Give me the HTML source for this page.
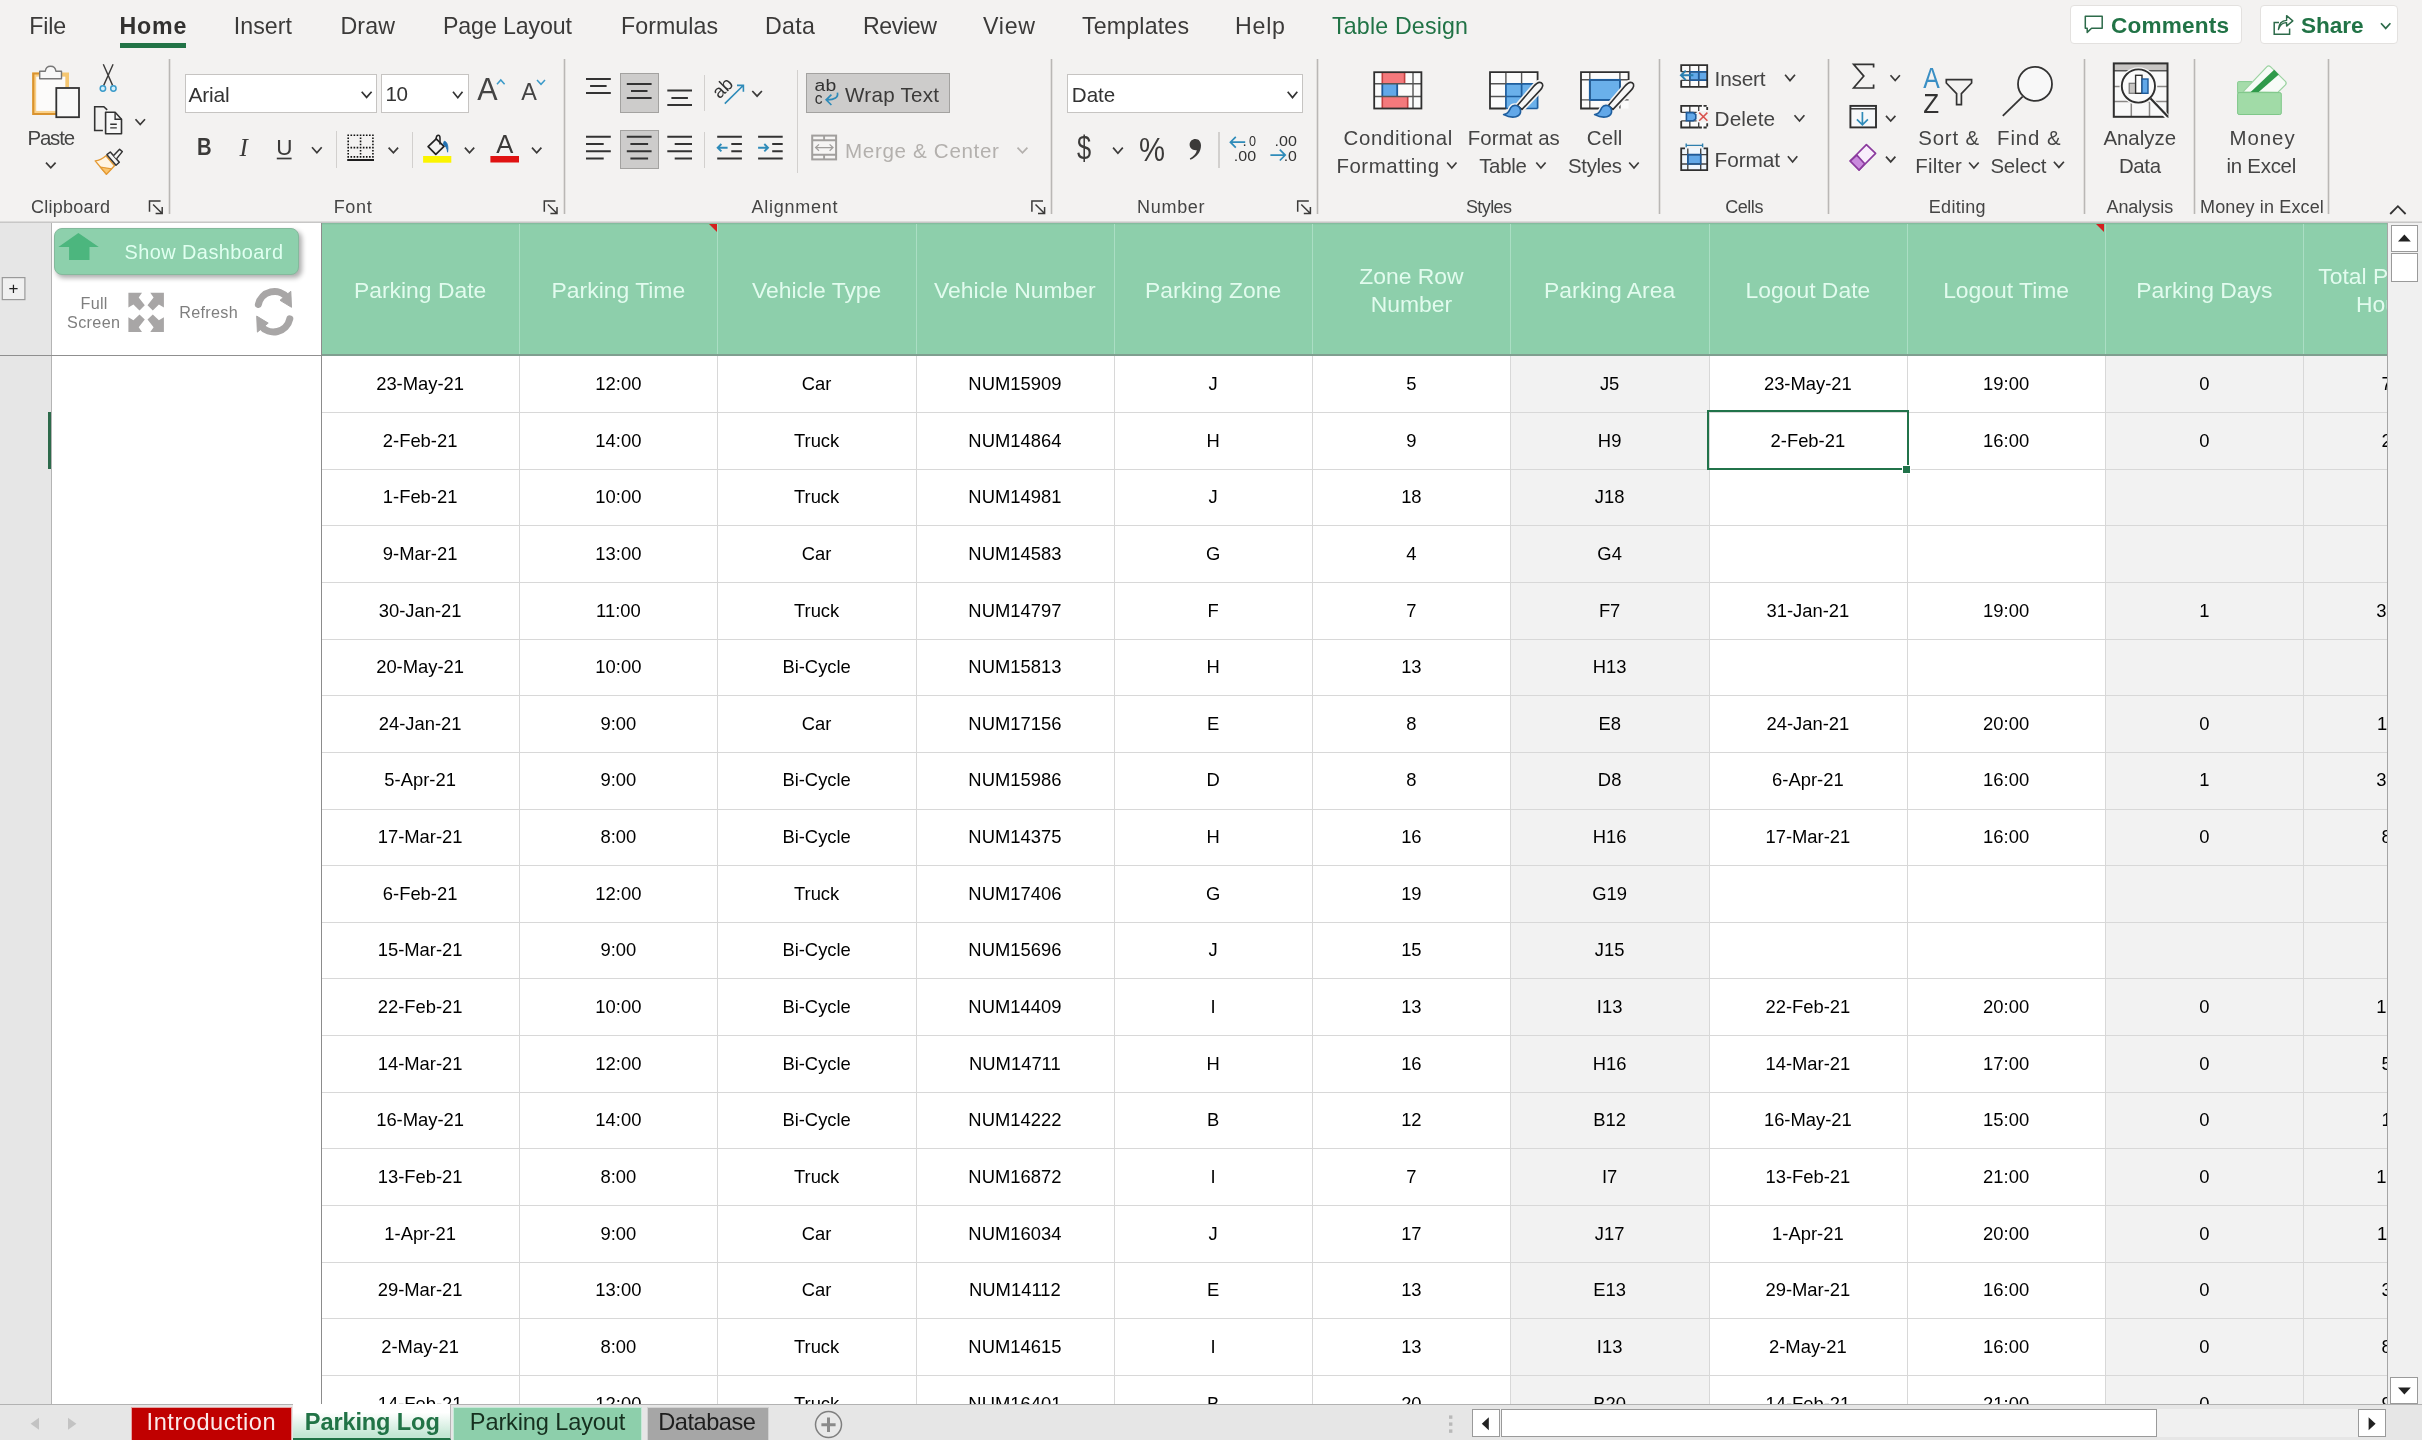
<!DOCTYPE html>
<html lang="en"><head><meta charset="utf-8"><title>Parking Log</title>
<style>
html,body{margin:0;padding:0}
body{width:2422px;height:1440px;position:relative;overflow:hidden;background:#f3f2f1;font-family:"Liberation Sans",sans-serif}
.t{position:absolute;white-space:pre;display:block}
.sep{position:absolute;width:1px;background:#b9b7b5;border-left:1px solid #e2e0de;border-right:1px solid #e2e0de;box-sizing:content-box}
.sep2{position:absolute;width:1.3px;background:#d2d0ce}
.box{position:absolute;background:#fff;border:1.8px solid #c6c4c2;box-sizing:border-box}
.sel{position:absolute;background:#cdcccb;border:1.5px solid #a3a2a0;box-sizing:border-box}
.btn{position:absolute;background:#fff;border:1px solid #e3e1df;border-radius:4px;box-sizing:border-box}
#all{position:absolute;left:0;top:0;width:2422px;height:1440px;will-change:transform}
#ribbon{position:absolute;left:0;top:0;width:2422px;height:221px;background:#f3f2f1}
#rshadow{position:absolute;left:0;top:221px;width:2422px;height:3px;background:linear-gradient(#e6e5e4,#a9a9a9)}
#sheet{position:absolute;left:0;top:223px;width:2387px;height:1181.5px;background:#fff;overflow:hidden}
#vscroll{position:absolute;left:2387px;top:223px;width:35px;height:1182px;background:#f0f0f0;border-left:1.4px solid #a6a6a6;box-sizing:border-box}
#bottom{position:absolute;left:0;top:1404px;width:2422px;height:36px;background:#e6e6e6;border-top:1.4px solid #b2b2b2;box-sizing:border-box}
.sb{position:absolute;background:#fff;border:1.8px solid #9a9a9a;box-sizing:border-box}
.tab{position:absolute;top:1407.2px;height:33px;box-sizing:border-box}
</style></head><body><div id="all">
<div id="ribbon"></div>
<span class="t" style="left:29.20px;top:15.00px;font-size:23.2px;line-height:23.2px;color:#3b3a39;letter-spacing:-0.125px;">File</span>
<span class="t" style="left:119.60px;top:15.00px;font-size:23.2px;line-height:23.2px;color:#323130;font-weight:700;letter-spacing:0.754px;">Home</span>
<span class="t" style="left:233.80px;top:15.00px;font-size:23.2px;line-height:23.2px;color:#3b3a39;letter-spacing:0.040px;">Insert</span>
<span class="t" style="left:340.50px;top:15.00px;font-size:23.2px;line-height:23.2px;color:#3b3a39;letter-spacing:0.097px;">Draw</span>
<span class="t" style="left:443.00px;top:15.00px;font-size:23.2px;line-height:23.2px;color:#3b3a39;letter-spacing:-0.122px;">Page Layout</span>
<span class="t" style="left:621.00px;top:15.00px;font-size:23.2px;line-height:23.2px;color:#3b3a39;letter-spacing:0.051px;">Formulas</span>
<span class="t" style="left:765.00px;top:15.00px;font-size:23.2px;line-height:23.2px;color:#3b3a39;letter-spacing:0.339px;">Data</span>
<span class="t" style="left:863.00px;top:15.00px;font-size:23.2px;line-height:23.2px;color:#3b3a39;letter-spacing:-0.406px;">Review</span>
<span class="t" style="left:983.00px;top:15.00px;font-size:23.2px;line-height:23.2px;color:#3b3a39;letter-spacing:0.719px;">View</span>
<span class="t" style="left:1082.00px;top:15.00px;font-size:23.2px;line-height:23.2px;color:#3b3a39;letter-spacing:0.164px;">Templates</span>
<span class="t" style="left:1235.00px;top:15.00px;font-size:23.2px;line-height:23.2px;color:#3b3a39;letter-spacing:0.766px;">Help</span>
<span class="t" style="left:1332.00px;top:15.00px;font-size:23.2px;line-height:23.2px;color:#217346;letter-spacing:0.176px;">Table Design</span>
<div style="position:absolute;left:120px;top:43px;width:66px;height:5px;background:#217346"></div>
<div class="btn" style="left:2070px;top:5px;width:172px;height:39px"></div>
<div class="btn" style="left:2260px;top:5px;width:138px;height:39px"></div>
<span class="t" style="left:2111.00px;top:15.00px;font-size:22.6px;line-height:22.6px;color:#217346;font-weight:700;letter-spacing:0.176px;">Comments</span>
<span class="t" style="left:2301.00px;top:15.00px;font-size:22.6px;line-height:22.6px;color:#217346;font-weight:700;letter-spacing:-0.074px;">Share</span>
<div class="sep" style="left:168px;top:58.5px;height:155px"></div>
<div class="sep" style="left:563px;top:58.5px;height:155px"></div>
<div class="sep" style="left:1050px;top:58.5px;height:155px"></div>
<div class="sep" style="left:1316px;top:58.5px;height:155px"></div>
<div class="sep" style="left:1658px;top:58.5px;height:155px"></div>
<div class="sep" style="left:1827px;top:58.5px;height:155px"></div>
<div class="sep" style="left:2083px;top:58.5px;height:155px"></div>
<div class="sep" style="left:2193px;top:58.5px;height:155px"></div>
<div class="sep" style="left:2327px;top:58.5px;height:155px"></div>
<div class="sep2" style="left:336.0px;top:131px;height:36.5px"></div>
<div class="sep2" style="left:412.0px;top:131.5px;height:36.5px"></div>
<div class="sep2" style="left:703.8px;top:74.8px;height:36.2px"></div>
<div class="sep2" style="left:703.8px;top:131.7px;height:35.9px"></div>
<div class="sep2" style="left:796.9px;top:69.5px;height:103.5px"></div>
<div class="sep2" style="left:1218.3px;top:131.7px;height:35.9px"></div>
<span class="t" style="left:30.90px;top:198.00px;font-size:18px;line-height:18px;color:#444;letter-spacing:0.269px;">Clipboard</span>
<span class="t" style="left:333.70px;top:198.00px;font-size:18px;line-height:18px;color:#444;letter-spacing:0.690px;">Font</span>
<span class="t" style="left:751.60px;top:198.00px;font-size:18px;line-height:18px;color:#444;letter-spacing:0.719px;">Alignment</span>
<span class="t" style="left:1137.00px;top:198.00px;font-size:18px;line-height:18px;color:#444;letter-spacing:0.714px;">Number</span>
<span class="t" style="left:1465.90px;top:198.00px;font-size:18px;line-height:18px;color:#444;letter-spacing:-0.586px;">Styles</span>
<span class="t" style="left:1725.20px;top:198.00px;font-size:18px;line-height:18px;color:#444;letter-spacing:-0.454px;">Cells</span>
<span class="t" style="left:1928.80px;top:198.00px;font-size:18px;line-height:18px;color:#444;letter-spacing:0.292px;">Editing</span>
<span class="t" style="left:2106.40px;top:198.00px;font-size:18px;line-height:18px;color:#444;letter-spacing:-0.019px;">Analysis</span>
<span class="t" style="left:2200.00px;top:198.00px;font-size:18px;line-height:18px;color:#444;letter-spacing:0.134px;">Money in Excel</span>
<span class="t" style="left:27.50px;top:128.00px;font-size:20.4px;line-height:20.4px;color:#444;letter-spacing:-1.164px;">Paste</span>
<div class="box" style="left:185px;top:73.5px;width:192.4px;height:39px"></div>
<div class="box" style="left:380.7px;top:73.5px;width:88.1px;height:39px"></div>
<span class="t" style="left:188.60px;top:84.00px;font-size:21px;line-height:21px;color:#333;letter-spacing:-0.254px;">Arial</span>
<span class="t" style="left:385.60px;top:84.00px;font-size:20.6px;line-height:20.6px;color:#333;letter-spacing:-0.522px;">10</span>
<span class="t" style="left:477.30px;top:74.00px;font-size:30.5px;line-height:30.5px;color:#444;">A</span>
<span class="t" style="left:521.20px;top:81.00px;font-size:23.4px;line-height:23.4px;color:#444;">A</span>
<span class="t" style="left:197.00px;top:136.00px;font-size:23.5px;line-height:23.5px;color:#3b3a39;font-weight:700;transform:scaleX(.86);transform-origin:0 0;">B</span>
<span class="t" style="left:239.50px;top:135.00px;font-size:25px;line-height:25px;color:#3b3a39;font-style:italic;font-family:'Liberation Serif',serif;">I</span>
<span class="t" style="left:276.30px;top:137.00px;font-size:22.5px;line-height:22.5px;color:#3b3a39;">U</span>
<span class="t" style="left:496.20px;top:132.00px;font-size:25.6px;line-height:25.6px;color:#3b3a39;">A</span>
<div class="sel" style="left:620.2px;top:73.1px;width:38.5px;height:39.7px"></div>
<div class="sel" style="left:620.2px;top:129.6px;width:38.5px;height:39.8px"></div>
<div class="sel" style="left:806px;top:73.1px;width:143.7px;height:39.7px"></div>
<span class="t" style="left:845.00px;top:85.00px;font-size:20.6px;line-height:20.6px;color:#3b3a39;letter-spacing:0.256px;">Wrap Text</span>
<span class="t" style="left:845.00px;top:141.00px;font-size:20.6px;line-height:20.6px;color:#b3b0ad;letter-spacing:0.663px;">Merge &amp; Center</span>
<div class="box" style="left:1067.3px;top:73.5px;width:236.1px;height:39px"></div>
<span class="t" style="left:1071.80px;top:85.00px;font-size:20.6px;line-height:20.6px;color:#333;letter-spacing:-0.005px;">Date</span>
<span class="t" style="left:1077.40px;top:131.00px;font-size:33.5px;line-height:33.5px;color:#3b3a39;transform:scaleX(.76);transform-origin:0 0;">$</span>
<span class="t" style="left:1139.20px;top:132.00px;font-size:34px;line-height:34px;color:#3b3a39;transform:scaleX(.86);transform-origin:0 0;">%</span>
<span class="t" style="left:1343.60px;top:128.00px;font-size:20.4px;line-height:20.4px;color:#444;letter-spacing:0.677px;">Conditional</span>
<span class="t" style="left:1336.40px;top:156.00px;font-size:20.4px;line-height:20.4px;color:#444;letter-spacing:0.572px;">Formatting</span>
<span class="t" style="left:1467.80px;top:128.00px;font-size:20.4px;line-height:20.4px;color:#444;letter-spacing:0.027px;">Format as</span>
<span class="t" style="left:1479.20px;top:156.00px;font-size:20.4px;line-height:20.4px;color:#444;letter-spacing:-0.287px;">Table</span>
<span class="t" style="left:1586.80px;top:128.00px;font-size:20.4px;line-height:20.4px;color:#444;letter-spacing:0.153px;">Cell</span>
<span class="t" style="left:1568.00px;top:156.00px;font-size:20.4px;line-height:20.4px;color:#444;letter-spacing:-0.306px;">Styles</span>
<span class="t" style="left:1714.60px;top:69.00px;font-size:20.8px;line-height:20.8px;color:#444;letter-spacing:-0.203px;">Insert</span>
<span class="t" style="left:1714.60px;top:109.00px;font-size:20.8px;line-height:20.8px;color:#444;letter-spacing:0.075px;">Delete</span>
<span class="t" style="left:1714.60px;top:150.00px;font-size:20.8px;line-height:20.8px;color:#444;letter-spacing:-0.075px;">Format</span>
<span class="t" style="left:1918.20px;top:128.00px;font-size:20.4px;line-height:20.4px;color:#444;letter-spacing:0.866px;">Sort &amp;</span>
<span class="t" style="left:1915.20px;top:156.00px;font-size:20.4px;line-height:20.4px;color:#444;letter-spacing:0.258px;">Filter</span>
<span class="t" style="left:1997.00px;top:128.00px;font-size:20.4px;line-height:20.4px;color:#444;letter-spacing:0.933px;">Find &amp;</span>
<span class="t" style="left:1990.40px;top:156.00px;font-size:20.4px;line-height:20.4px;color:#444;letter-spacing:-0.134px;">Select</span>
<span class="t" style="left:2103.40px;top:128.00px;font-size:20.4px;line-height:20.4px;color:#444;letter-spacing:0.009px;">Analyze</span>
<span class="t" style="left:2119.00px;top:156.00px;font-size:20.4px;line-height:20.4px;color:#444;letter-spacing:-0.359px;">Data</span>
<span class="t" style="left:2229.40px;top:128.00px;font-size:20.4px;line-height:20.4px;color:#444;letter-spacing:0.999px;">Money</span>
<span class="t" style="left:2226.60px;top:156.00px;font-size:20.4px;line-height:20.4px;color:#444;letter-spacing:-0.258px;">in Excel</span>
<svg style="position:absolute;left:0;top:0" width="2422" height="222" viewBox="0 0 2422 222" font-family="Liberation Sans, sans-serif">
<path d="M2085.3 16.3H2102.2V28.2H2091.6L2087.2 32.4V28.2H2085.3Z" fill="none" stroke="#2d6b4a" stroke-width="1.5" stroke-linejoin="round"/>
<path d="M2279 22.6H2274.2V34.2H2289.6V28.5" fill="none" stroke="#2d6b4a" stroke-width="1.5"/>
<path d="M2278.4 29.5C2278.8 24 2282 20.6 2286.6 20.4V15.6L2292.8 20.9L2286.6 26.1V22.6C2283 22.4 2280.2 24.6 2278.4 29.5Z" fill="none" stroke="#2d6b4a" stroke-width="1.4" stroke-linejoin="round"/>
<path d="M2381.0 23.2L2385.7 28.4L2390.4 23.2" fill="none" stroke="#2d6b4a" stroke-width="1.7"/>
<defs><linearGradient id="og" x1="0" x2="1"><stop offset="0" stop-color="#d28c2c"/><stop offset="1" stop-color="#fbd489"/></linearGradient></defs>
<path d="M40 72.6H32.2V115H56V110.8H36.4V76.8H40Z" fill="#fad189"/>
<path d="M40 72.6H32.2V115H56V113H34.4V74.6H40Z" fill="#d9932f"/>
<path d="M61.500 72.600H69V87H65.200V76.800H61.500Z" fill="#f6c771"/>
<rect x="36.4" y="76.8" width="28.8" height="34" fill="#fcfbfa"/>
<path d="M39.7 78.7V71.3H45.3C45.6 68.3 47.6 66.2 50.6 66.2C53.6 66.2 55.6 68.3 55.9 71.3H61.5V78.7Z" fill="#f8f8f8" stroke="#777" stroke-width="1.4" stroke-linejoin="round"/>
<rect x="56.3" y="88" width="22.700" height="29.200" fill="#f9f9f9" stroke="#333" stroke-width="1.8"/>
<path d="M46.0 162.6L50.8 167.8L55.6 162.6" fill="none" stroke="#3b3a39" stroke-width="1.7"/>
<path d="M103.3 64.2L112.6 85.4M113.1 64.2L103.7 85.4" stroke="#3b3a39" stroke-width="1.4" fill="none"/>
<circle cx="102.9" cy="88.5" r="2.7" fill="#d3effb" stroke="#3a9ac9" stroke-width="1.5"/><circle cx="113.4" cy="88.5" r="2.7" fill="#d3effb" stroke="#3a9ac9" stroke-width="1.5"/>
<path d="M102.9 130.5H94.7V106.7H103.8L107.2 109.9" fill="none" stroke="#333" stroke-width="1.6"/>
<path d="M105.6 112.3H115.1L121.5 119.2V133.8H105.6Z" fill="#f8f8f8" stroke="#333" stroke-width="1.6" stroke-linejoin="round"/>
<path d="M115.1 112.3V119.2H121.5M110.2 124.3H116.8M110.2 127.9H116.8" fill="none" stroke="#333" stroke-width="1.4"/>
<path d="M135.5 119.2L140.2 124.5L145.0 119.2" fill="none" stroke="#3b3a39" stroke-width="1.7"/>
<path d="M106 155.8C101.5 159.6 98 160.6 95.2 160.9L106.4 174.2L114.5 165.8Z" fill="#fff4e2" stroke="#e39a35" stroke-width="1.4" stroke-linejoin="round"/>
<path d="M100.3 167L106.4 174.2L111.6 168.8Z" fill="#fbc46c" stroke="#e39a35" stroke-width="1.2" stroke-linejoin="round"/>
<path d="M106.9 154.7L110.3 152L119.3 162.3L116 165.2Z" fill="#f4f4f4" stroke="#333" stroke-width="1.5" stroke-linejoin="round"/>
<path d="M113.6 155.6L119.6 149.3L122.3 151.6L116.5 158.9" fill="#f4f4f4" stroke="#333" stroke-width="1.5" stroke-linejoin="round"/>
<path d="M149.5 211.7V201.0H160.6M153.1 204.5L162.2 213.5M155.6 213.5H162.2V206.9" fill="none" stroke="#3b3a39" stroke-width="1.5"/>
<path d="M544.3 211.7V201.0H555.4M547.9 204.5L557.0 213.5M550.4 213.5H557.0V206.9" fill="none" stroke="#3b3a39" stroke-width="1.5"/>
<path d="M1031.9 211.7V201.0H1043.0M1035.5 204.5L1044.6 213.5M1038.0 213.5H1044.6V206.9" fill="none" stroke="#3b3a39" stroke-width="1.5"/>
<path d="M1297.7 211.7V201.0H1308.8M1301.3 204.5L1310.4 213.5M1303.8 213.5H1310.4V206.9" fill="none" stroke="#3b3a39" stroke-width="1.5"/>
<path d="M361.7 91.8L366.6 97.4L371.6 91.8" fill="none" stroke="#333" stroke-width="1.7"/>
<path d="M453.0 91.8L457.8 97.7L462.5 91.8" fill="none" stroke="#333" stroke-width="1.7"/>
<path d="M497.0 84.3L500.8 80.0L504.6 84.3" fill="none" stroke="#3a9ac9" stroke-width="1.5"/>
<path d="M537.0 80.0L541.0 84.3L545.0 80.0" fill="none" stroke="#3a9ac9" stroke-width="1.5"/>
<path d="M276.8 158.5H291.6" stroke="#3b3a39" stroke-width="1.7"/>
<path d="M312.0 147.3L316.9 152.8L321.7 147.3" fill="none" stroke="#3b3a39" stroke-width="1.7"/>
<path d="M347.40 134.40h1.6v1.6h-1.6zM347.40 137.50h1.6v1.6h-1.6zM347.40 140.60h1.6v1.6h-1.6zM347.40 143.70h1.6v1.6h-1.6zM347.40 146.80h1.6v1.6h-1.6zM347.40 149.90h1.6v1.6h-1.6zM347.40 153.00h1.6v1.6h-1.6zM347.40 156.10h1.6v1.6h-1.6zM350.49 134.40h1.6v1.6h-1.6zM350.49 146.80h1.6v1.6h-1.6zM350.49 156.10h1.6v1.6h-1.6zM353.58 134.40h1.6v1.6h-1.6zM353.58 146.80h1.6v1.6h-1.6zM353.58 156.10h1.6v1.6h-1.6zM356.67 134.40h1.6v1.6h-1.6zM356.67 146.80h1.6v1.6h-1.6zM356.67 156.10h1.6v1.6h-1.6zM359.76 134.40h1.6v1.6h-1.6zM359.76 137.50h1.6v1.6h-1.6zM359.76 140.60h1.6v1.6h-1.6zM359.76 143.70h1.6v1.6h-1.6zM359.76 146.80h1.6v1.6h-1.6zM359.76 149.90h1.6v1.6h-1.6zM359.76 153.00h1.6v1.6h-1.6zM359.76 156.10h1.6v1.6h-1.6zM362.85 134.40h1.6v1.6h-1.6zM362.85 146.80h1.6v1.6h-1.6zM362.85 156.10h1.6v1.6h-1.6zM365.94 134.40h1.6v1.6h-1.6zM365.94 146.80h1.6v1.6h-1.6zM365.94 156.10h1.6v1.6h-1.6zM369.03 134.40h1.6v1.6h-1.6zM369.03 146.80h1.6v1.6h-1.6zM369.03 156.10h1.6v1.6h-1.6zM372.12 134.40h1.6v1.6h-1.6zM372.12 137.50h1.6v1.6h-1.6zM372.12 140.60h1.6v1.6h-1.6zM372.12 143.70h1.6v1.6h-1.6zM372.12 146.80h1.6v1.6h-1.6zM372.12 149.90h1.6v1.6h-1.6zM372.12 153.00h1.6v1.6h-1.6zM372.12 156.10h1.6v1.6h-1.6z" fill="#111"/>
<path d="M347.2 160H374" stroke="#111" stroke-width="1.9"/>
<path d="M388.6 147.6L393.4 152.8L398.1 147.6" fill="none" stroke="#3b3a39" stroke-width="1.7"/>
<path d="M436.2 138.8L444 146.4L435.8 154.3L428.1 146.6Z" fill="none" stroke="#222" stroke-width="1.7" stroke-linejoin="round"/>
<path d="M436 139C436.2 136.6 437.2 135.2 438.4 135.2C439.5 135.2 440 136.3 440 138V144.4" fill="none" stroke="#222" stroke-width="1.5"/>
<path d="M444.2 141.2C447.2 141.6 448.6 146 447.6 152.2C447.2 148.4 445.8 146 443.2 144.2Z" fill="#1f6fb0" stroke="#1f6fb0" stroke-width="0.8" stroke-linejoin="round"/>
<rect x="423.1" y="156" width="28.2" height="6.7" fill="#fbf400"/>
<path d="M464.9 147.6L469.5 152.8L474.2 147.6" fill="none" stroke="#3b3a39" stroke-width="1.7"/>
<rect x="490.4" y="156" width="28.6" height="6.5" fill="#e01212"/>
<path d="M532.0 147.6L536.7 152.8L541.4 147.6" fill="none" stroke="#3b3a39" stroke-width="1.7"/>
<path d="M586.0 78.9H610.8M590.1 85.9H606.6M586.0 92.9H610.8" stroke="#333" stroke-width="2.0" fill="none"/>
<path d="M626.8 83.9H651.6M631.0 91.0H647.5M626.8 98.0H651.6" stroke="#333" stroke-width="2.0" fill="none"/>
<path d="M667.3 90.6H692.0M671.4 97.9H687.9M667.3 105.0H692.0" stroke="#333" stroke-width="2.0" fill="none"/>
<path d="M586.0 136.8H610.8M586.0 144.1H603.7M586.0 151.3H610.8M586.0 158.5H603.7" stroke="#333" stroke-width="2.0" fill="none"/>
<path d="M626.8 136.8H651.6M630.4 144.1H648.1M626.8 151.3H651.6M630.4 158.5H648.1" stroke="#333" stroke-width="2.0" fill="none"/>
<path d="M667.3 136.8H692.0M674.7 144.1H692.0M667.3 151.3H692.0M674.7 158.5H692.0" stroke="#333" stroke-width="2.0" fill="none"/>
<text x="0" y="0" transform="translate(719.6 99.6) rotate(-45)" font-size="18.6" fill="#333">ab</text>
<path d="M724.8 103.6L743.2 85.5M737 85.4H743.4V91.8" fill="none" stroke="#2e8bb9" stroke-width="1.6"/>
<path d="M752.3 91.0L757.1 96.2L761.9 91.0" fill="none" stroke="#3b3a39" stroke-width="1.7"/>
<path d="M717.2 136.8H741.9M731.3 144.1H741.9M731.3 151.3H741.9M717.2 158.5H741.9" stroke="#333" stroke-width="2.0" fill="none"/>
<path d="M717.9 147.7H727.6M721.4 144L717.7 147.7L721.4 151.4" fill="none" stroke="#2e8bb9" stroke-width="1.9"/>
<path d="M758.1 136.8H782.7M772.2 144.1H782.7M772.2 151.3H782.7M758.1 158.5H782.7" stroke="#333" stroke-width="2.0" fill="none"/>
<path d="M758.1 147.7H767.8M764.3 144L768 147.7L764.3 151.4" fill="none" stroke="#2e8bb9" stroke-width="1.9"/>
<text x="814.6" y="91" font-size="15.6" fill="#333" textLength="21.6" lengthAdjust="spacingAndGlyphs">ab</text>
<text x="814.8" y="104" font-size="15.6" fill="#333">c</text>
<path d="M837.4 92.6C838.6 97.4 834.4 99.9 827 99.8M831.4 94.6L826.2 99.8L831.4 105" fill="none" stroke="#2e8bb9" stroke-width="1.7"/>
<rect x="812.2" y="135.6" width="23.9" height="23.8" fill="#f6f5f4" stroke="#a19f9d" stroke-width="2"/>
<path d="M812.2 140.3H836.1M812.2 154.8H836.1M824.1 135.6V140.3M824.1 154.8V159.4" stroke="#a19f9d" stroke-width="1.9" fill="none"/>
<path d="M815.8 147.6H832.8M819 144.4L815.6 147.6L819 150.8M829.6 144.4L833 147.6L829.6 150.8" stroke="#a19f9d" stroke-width="1.3" fill="none"/>
<path d="M1017.5 147.6L1022.5 152.8L1027.4 147.6" fill="none" stroke="#b3b0ad" stroke-width="1.7"/>
<path d="M1287.7 91.8L1292.5 97.6L1297.3 91.8" fill="none" stroke="#333" stroke-width="1.7"/>
<path d="M1113.1 147.6L1117.9 153.2L1122.8 147.6" fill="none" stroke="#3b3a39" stroke-width="1.7"/>
<path d="M1189.6 144.6C1189.6 141.2 1192.2 138.9 1195.4 138.9C1199 138.9 1201 141.8 1201 145.6C1201 152 1196.8 157.4 1190.4 159.8L1189.8 158.4C1193.8 156.4 1196.2 153.6 1196.8 150.2C1192.600 150.800 1189.600 148.200 1189.600 144.600Z" fill="#3b3a39"/>
<text x="1248.9" y="145.9" font-size="15.2" fill="#333" textLength="7" lengthAdjust="spacingAndGlyphs">0</text>
<text x="1242.6" y="145.9" font-size="15.2" fill="#333">.</text>
<text x="1233.8" y="161" font-size="15.2" fill="#333" textLength="22.3" lengthAdjust="spacingAndGlyphs">.00</text>
<path d="M1230.6 142.2H1245.2M1235.8 136.8L1230.4 142.2L1235.8 147.6" fill="none" stroke="#2e8bb9" stroke-width="1.7"/>
<text x="1274.6" y="145.9" font-size="15.2" fill="#333" textLength="22.3" lengthAdjust="spacingAndGlyphs">.00</text>
<text x="1283.7" y="161" font-size="15.2" fill="#333" textLength="13.2" lengthAdjust="spacingAndGlyphs">.0</text>
<path d="M1270.4 155.1H1285M1279.8 149.7L1285.2 155.1L1279.8 160.500" fill="none" stroke="#2e8bb9" stroke-width="1.7"/>
<rect x="1374.200" y="72.200" width="47.2" height="36.3" fill="#fbfbfb"/>
<rect x="1382.3" y="72.2" width="22.3" height="11.6" fill="#f4797c"/><rect x="1382.3" y="96.5" width="25.4" height="12" fill="#f4797c"/>
<rect x="1382.3" y="83.8" width="14.9" height="12.7" fill="#62a8e8"/>
<path d="M1382.3 72.2V83.800M1404.6 72.2V83.8M1382.3 96.5V108.5M1407.7 96.5V108.5" stroke="#c24040" stroke-width="1.600" fill="none"/>
<path d="M1382.3 83.8V96.5M1397.2 83.8V96.5" stroke="#1e5a99" stroke-width="1.8" fill="none"/>
<path d="M1374.2 83.8H1421.4M1374.2 96.5H1421.4M1413 72.2V108.5" stroke="#555" stroke-width="1.400" fill="none"/>
<rect x="1374.200" y="72.200" width="47.2" height="36.3" fill="none" stroke="#2f2f2f" stroke-width="1.8"/>
<path d="M1447.2 162.5L1451.8 168.0L1456.5 162.5" fill="none" stroke="#3b3a39" stroke-width="1.7"/>
<rect x="1490" y="72.200" width="47.6" height="36.3" fill="#fbfbfb"/>
<rect x="1505.9" y="83.8" width="31.7" height="24.7" fill="#6ab0ea"/>
<path d="M1505.9 83.8V108.5M1521.6 83.8V108.5M1505.9 83.800H1537.6M1505.9 96.5H1537.600M1537.6 83.8V108.5M1505.900 108.5H1537.6" stroke="#1e5e9e" stroke-width="1.7" fill="none"/>
<path d="M1490 83.8H1505.900M1490 96.5H1505.900M1505.9 72.2V83.8M1521.6 72.2V83.8" stroke="#555" stroke-width="1.4" fill="none"/>
<path d="M1505.9 108.5H1490V72.2H1537.6V83.800" fill="none" stroke="#2f2f2f" stroke-width="1.8"/>
<path d="M1541.2 82.8C1543.8 84.4 1542.8 87.6 1540.0 90.4L1522.0 109.4L1517.4 105.6L1533.6 86.6C1536.4 83.2 1539.2 81.6 1541.2 82.8Z" fill="#f6f6f6" stroke="#f3f2f1" stroke-width="5" stroke-linejoin="round"/><path d="M1520.6 110.800C1521.0 116.4 1513.6 119.6 1503.6 114.6C1508.8 114.2 1509.2 110.4 1510.8 107.600C1513.2 104 1519.8 104.6 1520.6 110.800Z" fill="#62a8e8" stroke="#f3f2f1" stroke-width="4.4" stroke-linejoin="round"/><path d="M1541.2 82.8C1543.8 84.4 1542.8 87.6 1540.0 90.4L1522.0 109.4L1517.4 105.6L1533.6 86.6C1536.4 83.2 1539.2 81.6 1541.2 82.8Z" fill="#f6f6f6" stroke="#2f2f2f" stroke-width="1.6" stroke-linejoin="round"/><path d="M1520.6 110.800C1521.0 116.4 1513.6 119.6 1503.6 114.6C1508.8 114.2 1509.2 110.4 1510.8 107.600C1513.2 104 1519.8 104.6 1520.6 110.800Z" fill="#62a8e8" stroke="#1e5e9e" stroke-width="1.6" stroke-linejoin="round"/>
<path d="M1536.3 162.5L1540.9 168.0L1545.6 162.5" fill="none" stroke="#3b3a39" stroke-width="1.7"/>
<rect x="1581" y="72.2" width="47.6" height="36.3" fill="#fbfbfb"/>
<rect x="1589.8" y="79.8" width="30.1" height="20.100" fill="#6ab0ea" stroke="#1e5e9e" stroke-width="1.7"/>
<path d="M1581 79.8H1628.6M1581 99.900H1628.6M1589.8 72.2V108.5M1619.9 72.200V108.5" stroke="#555" stroke-width="1.4" fill="none"/>
<path d="M1589.8 79.8V99.9H1619.9V79.8Z" fill="none" stroke="#1e5e9e" stroke-width="1.7"/>
<path d="M1600 108.5H1581V72.2H1628.600V80" fill="none" stroke="#2f2f2f" stroke-width="1.8"/>
<path d="M1632.2 82.8C1634.8 84.4 1633.8 87.6 1631.0 90.4L1613.0 109.4L1608.4 105.6L1624.6 86.6C1627.4 83.2 1630.2 81.6 1632.2 82.8Z" fill="#f6f6f6" stroke="#f3f2f1" stroke-width="5" stroke-linejoin="round"/><path d="M1611.6 110.800C1612.0 116.4 1604.6 119.6 1594.6 114.6C1599.8 114.2 1600.2 110.4 1601.8 107.600C1604.2 104 1610.8 104.6 1611.6 110.800Z" fill="#62a8e8" stroke="#f3f2f1" stroke-width="4.4" stroke-linejoin="round"/><path d="M1632.2 82.8C1634.8 84.4 1633.8 87.6 1631.0 90.4L1613.0 109.4L1608.4 105.6L1624.6 86.6C1627.4 83.2 1630.2 81.6 1632.2 82.8Z" fill="#f6f6f6" stroke="#2f2f2f" stroke-width="1.6" stroke-linejoin="round"/><path d="M1611.6 110.800C1612.0 116.4 1604.6 119.6 1594.6 114.6C1599.8 114.2 1600.2 110.4 1601.8 107.600C1604.2 104 1610.8 104.6 1611.6 110.800Z" fill="#62a8e8" stroke="#1e5e9e" stroke-width="1.6" stroke-linejoin="round"/>
<path d="M1629.2 162.5L1634.0 168.0L1638.7 162.5" fill="none" stroke="#3b3a39" stroke-width="1.7"/>
<rect x="1681.2" y="65.2" width="26" height="21.6" fill="#fbfbfb"/>
<rect x="1689.8" y="71.800" width="17.4" height="8.5" fill="#62a8e8"/>
<path d="M1689.8 65.2V86.800M1698.7 65.2V86.8M1681.2 71.8H1707.2M1681.2 80.3H1707.2" stroke="#444" stroke-width="1.4" fill="none"/>
<path d="M1689.8 71.8H1707.200M1689.8 80.3H1707.2M1698.7 71.8V80.3M1689.8 71.800V80.3" stroke="#1e5a99" stroke-width="1.6" fill="none"/>
<path d="M1681.2 71.8V65.2H1707.2V86.8H1681.2V80.3" fill="none" stroke="#2f2f2f" stroke-width="1.8"/>
<rect x="1679" y="72.6" width="10" height="6.8" fill="#f3f2f1"/>
<path d="M1681.200 75.3H1693.400M1685.800 70.600L1681 75.3L1685.8 80.100" fill="none" stroke="#2a7fb0" stroke-width="2"/>
<path d="M1785.1 74.8L1790.0 80.6L1795.0 74.8" fill="none" stroke="#3b3a39" stroke-width="1.7"/>
<rect x="1681.2" y="105.8" width="26" height="21.7" fill="#fbfbfb"/>
<path d="M1689.8 105.8V127.5M1698.7 105.800V127.5M1681.2 112.4H1707.2M1681.2 120.9H1707.2" stroke="#444" stroke-width="1.4" fill="none"/>
<rect x="1696.6" y="111" width="12" height="11.4" fill="#f3f2f1"/>
<path d="M1681.2 112.4V105.8H1698.7M1681.2 120.9V127.5H1698.7" fill="none" stroke="#2f2f2f" stroke-width="1.8"/>
<path d="M1698.7 105.8H1707.2V111M1698.7 127.5H1707.2V122.4" fill="none" stroke="#2f2f2f" stroke-width="1.800" stroke-dasharray="3.200 1.6"/>
<path d="M1686.4 112.600H1693.200L1695.8 114.600V118.8L1693.2 120.8H1686.400Z" fill="#62a8e8" stroke="#1e5a99" stroke-width="1.6"/>
<path d="M1699.2 112.6L1707.4 120.800M1707.4 112.600L1699.2 120.8" stroke="#d9534f" stroke-width="1.500" fill="none"/>
<path d="M1794.5 115.2L1799.5 121.0L1804.4 115.2" fill="none" stroke="#3b3a39" stroke-width="1.7"/>
<rect x="1681.2" y="148.4" width="26" height="21.700" fill="#eef6fd"/>
<rect x="1687.8" y="154.6" width="12.900" height="9.4" fill="#62a8e8"/>
<path d="M1681.2 154.600H1707.2M1681.2 164H1707.2M1687.8 148.400V170.1M1700.7 148.4V170.100" stroke="#444" stroke-width="1.4" fill="none"/>
<path d="M1687.8 154.600H1700.7V164H1687.800Z" stroke="#1e5a99" stroke-width="1.600" fill="none"/>
<path d="M1685 148.400H1681.2V170.1H1707.2V148.4H1703.6" fill="none" stroke="#2f2f2f" stroke-width="1.8"/>
<path d="M1686.200 145.400H1702.6M1686.2 143.600V147.200M1702.600 143.6V147.2" fill="none" stroke="#2e7fae" stroke-width="1.400"/>
<path d="M1787.9 156.2L1792.6 162.0L1797.3 156.2" fill="none" stroke="#3b3a39" stroke-width="1.7"/>
<path d="M1873.600 67.600V64.3H1853.600L1863.800 76.100L1853.600 88H1873.600V84.6" fill="none" stroke="#333" stroke-width="1.700" stroke-linejoin="miter"/>
<path d="M1890.5 75.2L1895.2 80.5L1899.9 75.2" fill="none" stroke="#3b3a39" stroke-width="1.7"/>
<rect x="1850.4" y="105.900" width="25.6" height="21.5" fill="#f6f8fa" stroke="#2f2f2f" stroke-width="1.900"/>
<path d="M1850.4 108.800H1876" stroke="#2f2f2f" stroke-width="1.4"/>
<path d="M1862.4 112V124.600M1856.900 119.300L1862.4 124.8L1867.900 119.300" fill="none" stroke="#2e8bb9" stroke-width="1.7"/>
<path d="M1886.0 115.9L1890.7 121.0L1895.4 115.9" fill="none" stroke="#3b3a39" stroke-width="1.7"/>
<path d="M1866.400 144.600L1875.600 153.3L1859.100 170L1850.200 161Z" fill="#f9eefc" stroke="#8b3a9e" stroke-width="1.7" stroke-linejoin="round"/>
<path d="M1856.800 155.1L1864.700 163.800L1859.100 170L1850.200 161Z" fill="#c98add" stroke="#8b3a9e" stroke-width="1.7" stroke-linejoin="round"/>
<path d="M1886.0 156.6L1890.7 161.9L1895.4 156.6" fill="none" stroke="#3b3a39" stroke-width="1.7"/>
<text x="0" y="0" transform="translate(1923.200 88) scale(0.86 1)" font-size="28.8" fill="#3a8fc4">A</text>
<text x="0" y="0" transform="translate(1923.200 112.800) scale(0.93 1)" font-size="28" fill="#333">Z</text>
<path d="M1946.300 79.700H1971.600V83L1961.400 93.600V104.600H1956.600V93.600L1946.300 83Z" fill="none" stroke="#333" stroke-width="1.700" stroke-linejoin="miter"/>
<path d="M1969.1 162.5L1973.9 168.0L1978.7 162.5" fill="none" stroke="#3b3a39" stroke-width="1.7"/>
<circle cx="2035" cy="83.900" r="17" fill="#f8f8f8" stroke="#333" stroke-width="1.800"/>
<path d="M2022.600 96.600L2002.800 115.800" stroke="#333" stroke-width="1.800"/>
<path d="M2053.9 161.7L2058.9 167.4L2063.9 161.7" fill="none" stroke="#3b3a39" stroke-width="1.7"/>
<rect x="2113.800" y="63.400" width="53.700" height="53.400" fill="#f8f8f8"/>
<rect x="2113.800" y="63.400" width="53.700" height="7.400" fill="#c8c6c4"/>
<path d="M2113.800 86.400H2167.500M2113.800 101.600H2167.500M2131.300 101.600V116.800M2149.500 101.600V116.800" stroke="#8a8886" stroke-width="1.500" fill="none"/>
<path d="M2113.800 70.800H2167.500" stroke="#555" stroke-width="1.400"/>
<rect x="2113.800" y="63.400" width="53.700" height="53.400" fill="none" stroke="#2f2f2f" stroke-width="2"/>
<circle cx="2138.400" cy="86" r="16.600" fill="#fafafa" stroke="#f8f8f8" stroke-width="4.500"/>
<path d="M2150.600 99.200L2167.800 117.400" stroke="#f8f8f8" stroke-width="5"/>
<circle cx="2138.400" cy="86" r="16.600" fill="#fafafa" stroke="#2f2f2f" stroke-width="1.900"/>
<path d="M2150.600 98.400L2168 116.800" stroke="#2f2f2f" stroke-width="2.200"/>
<rect x="2129.200" y="83.300" width="6.400" height="10" fill="#c8c6c4" stroke="#777" stroke-width="1.200"/>
<rect x="2135.600" y="75.300" width="6.400" height="18" fill="#fff" stroke="#2f2f2f" stroke-width="1.400"/>
<rect x="2142" y="79" width="6" height="14.300" fill="#62a8e8" stroke="#1e5a99" stroke-width="1.400"/>
<path d="M2237.600 92.700V82.600Q2237.600 81.600 2238.600 81.600H2252V92.700Z" fill="#a5dcaa" stroke="#86cc90" stroke-width="1"/>
<path d="M2243 91.900L2267 66.600Q2268.600 65 2270.400 66.600L2285.400 81.300Q2287 83 2285.400 84.800L2277.800 92.400Z" fill="#f7fbf7" stroke="#9bd3a1" stroke-width="1.200"/>
<path d="M2250.400 92.300L2274.200 69.800L2278.800 74.400L2258.400 92.300Z" fill="#2f9a4a"/>
<rect x="2237.600" y="92.600" width="43.700" height="21.900" rx="1.500" fill="#a1dba7" stroke="#7fc789" stroke-width="1"/>
<path d="M2390.2 214.0L2397.9 206.2L2405.6 214.0" fill="none" stroke="#333" stroke-width="1.8"/>
</svg>
<div id="rshadow"></div>
<div id="sheet">
<div style="position:absolute;left:0;top:0;width:51px;height:1181px;background:#e6e6e6"></div>
<div style="position:absolute;left:50.6px;top:0;width:1.3px;height:1181px;background:#b4b4b4"></div>
<div style="position:absolute;left:1510.50px;top:132px;width:198.25px;height:1049px;background:#f2f2f2"></div>
<div style="position:absolute;left:2105.25px;top:132px;width:198.25px;height:1049px;background:#f2f2f2"></div>
<div style="position:absolute;left:2303.50px;top:132px;width:166.00px;height:1049px;background:#f2f2f2"></div>
<div style="position:absolute;left:321px;top:0;width:2066px;height:132px;background:#8dcfab"></div>
<div style="position:absolute;left:321px;top:0;width:2066px;height:2px;background:linear-gradient(#7fb79a,#8dcfab)"></div>
<div style="position:absolute;left:519px;top:1px;width:1px;height:131px;background:#abdec4"></div>
<div style="position:absolute;left:717px;top:1px;width:1px;height:131px;background:#abdec4"></div>
<div style="position:absolute;left:916px;top:1px;width:1px;height:131px;background:#abdec4"></div>
<div style="position:absolute;left:1114px;top:1px;width:1px;height:131px;background:#abdec4"></div>
<div style="position:absolute;left:1312px;top:1px;width:1px;height:131px;background:#abdec4"></div>
<div style="position:absolute;left:1510px;top:1px;width:1px;height:131px;background:#abdec4"></div>
<div style="position:absolute;left:1709px;top:1px;width:1px;height:131px;background:#abdec4"></div>
<div style="position:absolute;left:1907px;top:1px;width:1px;height:131px;background:#abdec4"></div>
<div style="position:absolute;left:2105px;top:1px;width:1px;height:131px;background:#abdec4"></div>
<div style="position:absolute;left:2303px;top:1px;width:1px;height:131px;background:#abdec4"></div>
<div style="position:absolute;left:519px;top:133px;width:1px;height:1048px;background:#d8d8d8"></div>
<div style="position:absolute;left:717px;top:133px;width:1px;height:1048px;background:#d8d8d8"></div>
<div style="position:absolute;left:916px;top:133px;width:1px;height:1048px;background:#d8d8d8"></div>
<div style="position:absolute;left:1114px;top:133px;width:1px;height:1048px;background:#d8d8d8"></div>
<div style="position:absolute;left:1312px;top:133px;width:1px;height:1048px;background:#d8d8d8"></div>
<div style="position:absolute;left:1510px;top:133px;width:1px;height:1048px;background:#d8d8d8"></div>
<div style="position:absolute;left:1709px;top:133px;width:1px;height:1048px;background:#d8d8d8"></div>
<div style="position:absolute;left:1907px;top:133px;width:1px;height:1048px;background:#d8d8d8"></div>
<div style="position:absolute;left:2105px;top:133px;width:1px;height:1048px;background:#d8d8d8"></div>
<div style="position:absolute;left:2303px;top:133px;width:1px;height:1048px;background:#d8d8d8"></div>
<div style="position:absolute;left:322px;top:189px;width:2066px;height:1px;background:#d8d8d8"></div>
<div style="position:absolute;left:322px;top:246px;width:2066px;height:1px;background:#d8d8d8"></div>
<div style="position:absolute;left:322px;top:302px;width:2066px;height:1px;background:#d8d8d8"></div>
<div style="position:absolute;left:322px;top:359px;width:2066px;height:1px;background:#d8d8d8"></div>
<div style="position:absolute;left:322px;top:416px;width:2066px;height:1px;background:#d8d8d8"></div>
<div style="position:absolute;left:322px;top:472px;width:2066px;height:1px;background:#d8d8d8"></div>
<div style="position:absolute;left:322px;top:529px;width:2066px;height:1px;background:#d8d8d8"></div>
<div style="position:absolute;left:322px;top:586px;width:2066px;height:1px;background:#d8d8d8"></div>
<div style="position:absolute;left:322px;top:642px;width:2066px;height:1px;background:#d8d8d8"></div>
<div style="position:absolute;left:322px;top:699px;width:2066px;height:1px;background:#d8d8d8"></div>
<div style="position:absolute;left:322px;top:755px;width:2066px;height:1px;background:#d8d8d8"></div>
<div style="position:absolute;left:322px;top:812px;width:2066px;height:1px;background:#d8d8d8"></div>
<div style="position:absolute;left:322px;top:869px;width:2066px;height:1px;background:#d8d8d8"></div>
<div style="position:absolute;left:322px;top:925px;width:2066px;height:1px;background:#d8d8d8"></div>
<div style="position:absolute;left:322px;top:982px;width:2066px;height:1px;background:#d8d8d8"></div>
<div style="position:absolute;left:322px;top:1039px;width:2066px;height:1px;background:#d8d8d8"></div>
<div style="position:absolute;left:322px;top:1095px;width:2066px;height:1px;background:#d8d8d8"></div>
<div style="position:absolute;left:322px;top:1152px;width:2066px;height:1px;background:#d8d8d8"></div>
<div style="position:absolute;left:0;top:131.8px;width:2387px;height:1.5px;background:#8f8f8f"></div>
<div style="position:absolute;left:321px;top:131.2px;width:2066px;height:1.5px;background:#809f90"></div>
<div style="position:absolute;left:320.7px;top:0;width:1.5px;height:1181px;background:#8c8c8c"></div>
<div style="position:absolute;left:48px;top:188.6px;width:3px;height:57.3px;background:#2d6a4b"></div>
<span class="t" style="left:353.96px;top:56.00px;font-size:22.9px;line-height:22.9px;color:#e2fbee;">Parking Date</span>
<span class="t" style="left:551.59px;top:56.00px;font-size:22.9px;line-height:22.9px;color:#e2fbee;">Parking Time</span>
<span class="t" style="left:751.93px;top:56.00px;font-size:22.9px;line-height:22.9px;color:#e2fbee;">Vehicle Type</span>
<span class="t" style="left:934.08px;top:56.00px;font-size:22.9px;line-height:22.9px;color:#e2fbee;">Vehicle Number</span>
<span class="t" style="left:1145.05px;top:56.00px;font-size:22.9px;line-height:22.9px;color:#e2fbee;">Parking Zone</span>
<span class="t" style="left:1359.21px;top:42.00px;font-size:22.9px;line-height:22.9px;color:#e2fbee;">Zone Row</span>
<span class="t" style="left:1370.66px;top:70.00px;font-size:22.9px;line-height:22.9px;color:#e2fbee;">Number</span>
<span class="t" style="left:1544.09px;top:56.00px;font-size:22.9px;line-height:22.9px;color:#e2fbee;">Parking Area</span>
<span class="t" style="left:1745.51px;top:56.00px;font-size:22.9px;line-height:22.9px;color:#e2fbee;">Logout Date</span>
<span class="t" style="left:1943.13px;top:56.00px;font-size:22.9px;line-height:22.9px;color:#e2fbee;">Logout Time</span>
<span class="t" style="left:2136.30px;top:56.00px;font-size:22.9px;line-height:22.9px;color:#e2fbee;">Parking Days</span>
<span class="t" style="left:2318.34px;top:42.00px;font-size:22.9px;line-height:22.9px;color:#e2fbee;">Total Parking</span>
<span class="t" style="left:2355.97px;top:70.00px;font-size:22.9px;line-height:22.9px;color:#e2fbee;">Hours</span>
<span class="t" style="left:376.17px;top:152.00px;font-size:18.4px;line-height:18.4px;color:#000;">23-May-21</span>
<span class="t" style="left:595.36px;top:152.00px;font-size:18.4px;line-height:18.4px;color:#000;">12:00</span>
<span class="t" style="left:801.80px;top:152.00px;font-size:18.4px;line-height:18.4px;color:#000;">Car</span>
<span class="t" style="left:968.36px;top:152.00px;font-size:18.4px;line-height:18.4px;color:#000;">NUM15909</span>
<span class="t" style="left:1208.52px;top:152.00px;font-size:18.4px;line-height:18.4px;color:#000;">J</span>
<span class="t" style="left:1406.26px;top:152.00px;font-size:18.4px;line-height:18.4px;color:#000;">5</span>
<span class="t" style="left:1599.91px;top:152.00px;font-size:18.4px;line-height:18.4px;color:#000;">J5</span>
<span class="t" style="left:1763.92px;top:152.00px;font-size:18.4px;line-height:18.4px;color:#000;">23-May-21</span>
<span class="t" style="left:1983.11px;top:152.00px;font-size:18.4px;line-height:18.4px;color:#000;">19:00</span>
<span class="t" style="left:2199.26px;top:152.00px;font-size:18.4px;line-height:18.4px;color:#000;">0</span>
<span class="t" style="left:2381.38px;top:152.00px;font-size:18.4px;line-height:18.4px;color:#000;">7</span>
<span class="t" style="left:382.81px;top:209.00px;font-size:18.4px;line-height:18.4px;color:#000;">2-Feb-21</span>
<span class="t" style="left:595.36px;top:209.00px;font-size:18.4px;line-height:18.4px;color:#000;">14:00</span>
<span class="t" style="left:793.98px;top:209.00px;font-size:18.4px;line-height:18.4px;color:#000;">Truck</span>
<span class="t" style="left:968.36px;top:209.00px;font-size:18.4px;line-height:18.4px;color:#000;">NUM14864</span>
<span class="t" style="left:1206.48px;top:209.00px;font-size:18.4px;line-height:18.4px;color:#000;">H</span>
<span class="t" style="left:1406.26px;top:209.00px;font-size:18.4px;line-height:18.4px;color:#000;">9</span>
<span class="t" style="left:1597.87px;top:209.00px;font-size:18.4px;line-height:18.4px;color:#000;">H9</span>
<span class="t" style="left:1770.56px;top:209.00px;font-size:18.4px;line-height:18.4px;color:#000;">2-Feb-21</span>
<span class="t" style="left:1983.11px;top:209.00px;font-size:18.4px;line-height:18.4px;color:#000;">16:00</span>
<span class="t" style="left:2199.26px;top:209.00px;font-size:18.4px;line-height:18.4px;color:#000;">0</span>
<span class="t" style="left:2381.38px;top:209.00px;font-size:18.4px;line-height:18.4px;color:#000;">2</span>
<span class="t" style="left:382.81px;top:265.00px;font-size:18.4px;line-height:18.4px;color:#000;">1-Feb-21</span>
<span class="t" style="left:595.36px;top:265.00px;font-size:18.4px;line-height:18.4px;color:#000;">10:00</span>
<span class="t" style="left:793.98px;top:265.00px;font-size:18.4px;line-height:18.4px;color:#000;">Truck</span>
<span class="t" style="left:968.36px;top:265.00px;font-size:18.4px;line-height:18.4px;color:#000;">NUM14981</span>
<span class="t" style="left:1208.52px;top:265.00px;font-size:18.4px;line-height:18.4px;color:#000;">J</span>
<span class="t" style="left:1401.14px;top:265.00px;font-size:18.4px;line-height:18.4px;color:#000;">18</span>
<span class="t" style="left:1594.80px;top:265.00px;font-size:18.4px;line-height:18.4px;color:#000;">J18</span>
<span class="t" style="left:382.82px;top:322.00px;font-size:18.4px;line-height:18.4px;color:#000;">9-Mar-21</span>
<span class="t" style="left:595.36px;top:322.00px;font-size:18.4px;line-height:18.4px;color:#000;">13:00</span>
<span class="t" style="left:801.80px;top:322.00px;font-size:18.4px;line-height:18.4px;color:#000;">Car</span>
<span class="t" style="left:968.36px;top:322.00px;font-size:18.4px;line-height:18.4px;color:#000;">NUM14583</span>
<span class="t" style="left:1205.97px;top:322.00px;font-size:18.4px;line-height:18.4px;color:#000;">G</span>
<span class="t" style="left:1406.26px;top:322.00px;font-size:18.4px;line-height:18.4px;color:#000;">4</span>
<span class="t" style="left:1597.35px;top:322.00px;font-size:18.4px;line-height:18.4px;color:#000;">G4</span>
<span class="t" style="left:378.72px;top:379.00px;font-size:18.4px;line-height:18.4px;color:#000;">30-Jan-21</span>
<span class="t" style="left:596.05px;top:379.00px;font-size:18.4px;line-height:18.4px;color:#000;">11:00</span>
<span class="t" style="left:793.98px;top:379.00px;font-size:18.4px;line-height:18.4px;color:#000;">Truck</span>
<span class="t" style="left:968.36px;top:379.00px;font-size:18.4px;line-height:18.4px;color:#000;">NUM14797</span>
<span class="t" style="left:1207.51px;top:379.00px;font-size:18.4px;line-height:18.4px;color:#000;">F</span>
<span class="t" style="left:1406.26px;top:379.00px;font-size:18.4px;line-height:18.4px;color:#000;">7</span>
<span class="t" style="left:1598.89px;top:379.00px;font-size:18.4px;line-height:18.4px;color:#000;">F7</span>
<span class="t" style="left:1766.47px;top:379.00px;font-size:18.4px;line-height:18.4px;color:#000;">31-Jan-21</span>
<span class="t" style="left:1983.11px;top:379.00px;font-size:18.4px;line-height:18.4px;color:#000;">19:00</span>
<span class="t" style="left:2199.26px;top:379.00px;font-size:18.4px;line-height:18.4px;color:#000;">1</span>
<span class="t" style="left:2376.27px;top:379.00px;font-size:18.4px;line-height:18.4px;color:#000;">32</span>
<span class="t" style="left:376.17px;top:435.00px;font-size:18.4px;line-height:18.4px;color:#000;">20-May-21</span>
<span class="t" style="left:595.36px;top:435.00px;font-size:18.4px;line-height:18.4px;color:#000;">10:00</span>
<span class="t" style="left:782.39px;top:435.00px;font-size:18.4px;line-height:18.4px;color:#000;">Bi-Cycle</span>
<span class="t" style="left:968.36px;top:435.00px;font-size:18.4px;line-height:18.4px;color:#000;">NUM15813</span>
<span class="t" style="left:1206.48px;top:435.00px;font-size:18.4px;line-height:18.4px;color:#000;">H</span>
<span class="t" style="left:1401.14px;top:435.00px;font-size:18.4px;line-height:18.4px;color:#000;">13</span>
<span class="t" style="left:1592.75px;top:435.00px;font-size:18.4px;line-height:18.4px;color:#000;">H13</span>
<span class="t" style="left:378.72px;top:492.00px;font-size:18.4px;line-height:18.4px;color:#000;">24-Jan-21</span>
<span class="t" style="left:600.48px;top:492.00px;font-size:18.4px;line-height:18.4px;color:#000;">9:00</span>
<span class="t" style="left:801.80px;top:492.00px;font-size:18.4px;line-height:18.4px;color:#000;">Car</span>
<span class="t" style="left:968.36px;top:492.00px;font-size:18.4px;line-height:18.4px;color:#000;">NUM17156</span>
<span class="t" style="left:1206.98px;top:492.00px;font-size:18.4px;line-height:18.4px;color:#000;">E</span>
<span class="t" style="left:1406.26px;top:492.00px;font-size:18.4px;line-height:18.4px;color:#000;">8</span>
<span class="t" style="left:1598.38px;top:492.00px;font-size:18.4px;line-height:18.4px;color:#000;">E8</span>
<span class="t" style="left:1766.47px;top:492.00px;font-size:18.4px;line-height:18.4px;color:#000;">24-Jan-21</span>
<span class="t" style="left:1983.11px;top:492.00px;font-size:18.4px;line-height:18.4px;color:#000;">20:00</span>
<span class="t" style="left:2199.26px;top:492.00px;font-size:18.4px;line-height:18.4px;color:#000;">0</span>
<span class="t" style="left:2376.95px;top:492.00px;font-size:18.4px;line-height:18.4px;color:#000;">11</span>
<span class="t" style="left:384.34px;top:548.00px;font-size:18.4px;line-height:18.4px;color:#000;">5-Apr-21</span>
<span class="t" style="left:600.48px;top:548.00px;font-size:18.4px;line-height:18.4px;color:#000;">9:00</span>
<span class="t" style="left:782.39px;top:548.00px;font-size:18.4px;line-height:18.4px;color:#000;">Bi-Cycle</span>
<span class="t" style="left:968.36px;top:548.00px;font-size:18.4px;line-height:18.4px;color:#000;">NUM15986</span>
<span class="t" style="left:1206.48px;top:548.00px;font-size:18.4px;line-height:18.4px;color:#000;">D</span>
<span class="t" style="left:1406.26px;top:548.00px;font-size:18.4px;line-height:18.4px;color:#000;">8</span>
<span class="t" style="left:1597.87px;top:548.00px;font-size:18.4px;line-height:18.4px;color:#000;">D8</span>
<span class="t" style="left:1772.09px;top:548.00px;font-size:18.4px;line-height:18.4px;color:#000;">6-Apr-21</span>
<span class="t" style="left:1983.11px;top:548.00px;font-size:18.4px;line-height:18.4px;color:#000;">16:00</span>
<span class="t" style="left:2199.26px;top:548.00px;font-size:18.4px;line-height:18.4px;color:#000;">1</span>
<span class="t" style="left:2376.27px;top:548.00px;font-size:18.4px;line-height:18.4px;color:#000;">31</span>
<span class="t" style="left:377.70px;top:605.00px;font-size:18.4px;line-height:18.4px;color:#000;">17-Mar-21</span>
<span class="t" style="left:600.48px;top:605.00px;font-size:18.4px;line-height:18.4px;color:#000;">8:00</span>
<span class="t" style="left:782.39px;top:605.00px;font-size:18.4px;line-height:18.4px;color:#000;">Bi-Cycle</span>
<span class="t" style="left:968.36px;top:605.00px;font-size:18.4px;line-height:18.4px;color:#000;">NUM14375</span>
<span class="t" style="left:1206.48px;top:605.00px;font-size:18.4px;line-height:18.4px;color:#000;">H</span>
<span class="t" style="left:1401.14px;top:605.00px;font-size:18.4px;line-height:18.4px;color:#000;">16</span>
<span class="t" style="left:1592.75px;top:605.00px;font-size:18.4px;line-height:18.4px;color:#000;">H16</span>
<span class="t" style="left:1765.45px;top:605.00px;font-size:18.4px;line-height:18.4px;color:#000;">17-Mar-21</span>
<span class="t" style="left:1983.11px;top:605.00px;font-size:18.4px;line-height:18.4px;color:#000;">16:00</span>
<span class="t" style="left:2199.26px;top:605.00px;font-size:18.4px;line-height:18.4px;color:#000;">0</span>
<span class="t" style="left:2381.38px;top:605.00px;font-size:18.4px;line-height:18.4px;color:#000;">8</span>
<span class="t" style="left:382.81px;top:662.00px;font-size:18.4px;line-height:18.4px;color:#000;">6-Feb-21</span>
<span class="t" style="left:595.36px;top:662.00px;font-size:18.4px;line-height:18.4px;color:#000;">12:00</span>
<span class="t" style="left:793.98px;top:662.00px;font-size:18.4px;line-height:18.4px;color:#000;">Truck</span>
<span class="t" style="left:968.36px;top:662.00px;font-size:18.4px;line-height:18.4px;color:#000;">NUM17406</span>
<span class="t" style="left:1205.97px;top:662.00px;font-size:18.4px;line-height:18.4px;color:#000;">G</span>
<span class="t" style="left:1401.14px;top:662.00px;font-size:18.4px;line-height:18.4px;color:#000;">19</span>
<span class="t" style="left:1592.24px;top:662.00px;font-size:18.4px;line-height:18.4px;color:#000;">G19</span>
<span class="t" style="left:377.70px;top:718.00px;font-size:18.4px;line-height:18.4px;color:#000;">15-Mar-21</span>
<span class="t" style="left:600.48px;top:718.00px;font-size:18.4px;line-height:18.4px;color:#000;">9:00</span>
<span class="t" style="left:782.39px;top:718.00px;font-size:18.4px;line-height:18.4px;color:#000;">Bi-Cycle</span>
<span class="t" style="left:968.36px;top:718.00px;font-size:18.4px;line-height:18.4px;color:#000;">NUM15696</span>
<span class="t" style="left:1208.52px;top:718.00px;font-size:18.4px;line-height:18.4px;color:#000;">J</span>
<span class="t" style="left:1401.14px;top:718.00px;font-size:18.4px;line-height:18.4px;color:#000;">15</span>
<span class="t" style="left:1594.80px;top:718.00px;font-size:18.4px;line-height:18.4px;color:#000;">J15</span>
<span class="t" style="left:377.70px;top:775.00px;font-size:18.4px;line-height:18.4px;color:#000;">22-Feb-21</span>
<span class="t" style="left:595.36px;top:775.00px;font-size:18.4px;line-height:18.4px;color:#000;">10:00</span>
<span class="t" style="left:782.39px;top:775.00px;font-size:18.4px;line-height:18.4px;color:#000;">Bi-Cycle</span>
<span class="t" style="left:968.36px;top:775.00px;font-size:18.4px;line-height:18.4px;color:#000;">NUM14409</span>
<span class="t" style="left:1210.56px;top:775.00px;font-size:18.4px;line-height:18.4px;color:#000;">I</span>
<span class="t" style="left:1401.14px;top:775.00px;font-size:18.4px;line-height:18.4px;color:#000;">13</span>
<span class="t" style="left:1596.84px;top:775.00px;font-size:18.4px;line-height:18.4px;color:#000;">I13</span>
<span class="t" style="left:1765.45px;top:775.00px;font-size:18.4px;line-height:18.4px;color:#000;">22-Feb-21</span>
<span class="t" style="left:1983.11px;top:775.00px;font-size:18.4px;line-height:18.4px;color:#000;">20:00</span>
<span class="t" style="left:2199.26px;top:775.00px;font-size:18.4px;line-height:18.4px;color:#000;">0</span>
<span class="t" style="left:2376.27px;top:775.00px;font-size:18.4px;line-height:18.4px;color:#000;">10</span>
<span class="t" style="left:377.70px;top:832.00px;font-size:18.4px;line-height:18.4px;color:#000;">14-Mar-21</span>
<span class="t" style="left:595.36px;top:832.00px;font-size:18.4px;line-height:18.4px;color:#000;">12:00</span>
<span class="t" style="left:782.39px;top:832.00px;font-size:18.4px;line-height:18.4px;color:#000;">Bi-Cycle</span>
<span class="t" style="left:969.05px;top:832.00px;font-size:18.4px;line-height:18.4px;color:#000;">NUM14711</span>
<span class="t" style="left:1206.48px;top:832.00px;font-size:18.4px;line-height:18.4px;color:#000;">H</span>
<span class="t" style="left:1401.14px;top:832.00px;font-size:18.4px;line-height:18.4px;color:#000;">16</span>
<span class="t" style="left:1592.75px;top:832.00px;font-size:18.4px;line-height:18.4px;color:#000;">H16</span>
<span class="t" style="left:1765.45px;top:832.00px;font-size:18.4px;line-height:18.4px;color:#000;">14-Mar-21</span>
<span class="t" style="left:1983.11px;top:832.00px;font-size:18.4px;line-height:18.4px;color:#000;">17:00</span>
<span class="t" style="left:2199.26px;top:832.00px;font-size:18.4px;line-height:18.4px;color:#000;">0</span>
<span class="t" style="left:2381.38px;top:832.00px;font-size:18.4px;line-height:18.4px;color:#000;">5</span>
<span class="t" style="left:376.17px;top:888.00px;font-size:18.4px;line-height:18.4px;color:#000;">16-May-21</span>
<span class="t" style="left:595.36px;top:888.00px;font-size:18.4px;line-height:18.4px;color:#000;">14:00</span>
<span class="t" style="left:782.39px;top:888.00px;font-size:18.4px;line-height:18.4px;color:#000;">Bi-Cycle</span>
<span class="t" style="left:968.36px;top:888.00px;font-size:18.4px;line-height:18.4px;color:#000;">NUM14222</span>
<span class="t" style="left:1206.98px;top:888.00px;font-size:18.4px;line-height:18.4px;color:#000;">B</span>
<span class="t" style="left:1401.14px;top:888.00px;font-size:18.4px;line-height:18.4px;color:#000;">12</span>
<span class="t" style="left:1593.26px;top:888.00px;font-size:18.4px;line-height:18.4px;color:#000;">B12</span>
<span class="t" style="left:1763.92px;top:888.00px;font-size:18.4px;line-height:18.4px;color:#000;">16-May-21</span>
<span class="t" style="left:1983.11px;top:888.00px;font-size:18.4px;line-height:18.4px;color:#000;">15:00</span>
<span class="t" style="left:2199.26px;top:888.00px;font-size:18.4px;line-height:18.4px;color:#000;">0</span>
<span class="t" style="left:2381.38px;top:888.00px;font-size:18.4px;line-height:18.4px;color:#000;">1</span>
<span class="t" style="left:377.70px;top:945.00px;font-size:18.4px;line-height:18.4px;color:#000;">13-Feb-21</span>
<span class="t" style="left:600.48px;top:945.00px;font-size:18.4px;line-height:18.4px;color:#000;">8:00</span>
<span class="t" style="left:793.98px;top:945.00px;font-size:18.4px;line-height:18.4px;color:#000;">Truck</span>
<span class="t" style="left:968.36px;top:945.00px;font-size:18.4px;line-height:18.4px;color:#000;">NUM16872</span>
<span class="t" style="left:1210.56px;top:945.00px;font-size:18.4px;line-height:18.4px;color:#000;">I</span>
<span class="t" style="left:1406.26px;top:945.00px;font-size:18.4px;line-height:18.4px;color:#000;">7</span>
<span class="t" style="left:1601.95px;top:945.00px;font-size:18.4px;line-height:18.4px;color:#000;">I7</span>
<span class="t" style="left:1765.45px;top:945.00px;font-size:18.4px;line-height:18.4px;color:#000;">13-Feb-21</span>
<span class="t" style="left:1983.11px;top:945.00px;font-size:18.4px;line-height:18.4px;color:#000;">21:00</span>
<span class="t" style="left:2199.26px;top:945.00px;font-size:18.4px;line-height:18.4px;color:#000;">0</span>
<span class="t" style="left:2376.27px;top:945.00px;font-size:18.4px;line-height:18.4px;color:#000;">13</span>
<span class="t" style="left:384.34px;top:1002.00px;font-size:18.4px;line-height:18.4px;color:#000;">1-Apr-21</span>
<span class="t" style="left:600.48px;top:1002.00px;font-size:18.4px;line-height:18.4px;color:#000;">9:00</span>
<span class="t" style="left:801.80px;top:1002.00px;font-size:18.4px;line-height:18.4px;color:#000;">Car</span>
<span class="t" style="left:968.36px;top:1002.00px;font-size:18.4px;line-height:18.4px;color:#000;">NUM16034</span>
<span class="t" style="left:1208.52px;top:1002.00px;font-size:18.4px;line-height:18.4px;color:#000;">J</span>
<span class="t" style="left:1401.14px;top:1002.00px;font-size:18.4px;line-height:18.4px;color:#000;">17</span>
<span class="t" style="left:1594.80px;top:1002.00px;font-size:18.4px;line-height:18.4px;color:#000;">J17</span>
<span class="t" style="left:1772.09px;top:1002.00px;font-size:18.4px;line-height:18.4px;color:#000;">1-Apr-21</span>
<span class="t" style="left:1983.11px;top:1002.00px;font-size:18.4px;line-height:18.4px;color:#000;">20:00</span>
<span class="t" style="left:2199.26px;top:1002.00px;font-size:18.4px;line-height:18.4px;color:#000;">0</span>
<span class="t" style="left:2376.95px;top:1002.00px;font-size:18.4px;line-height:18.4px;color:#000;">11</span>
<span class="t" style="left:377.70px;top:1058.00px;font-size:18.4px;line-height:18.4px;color:#000;">29-Mar-21</span>
<span class="t" style="left:595.36px;top:1058.00px;font-size:18.4px;line-height:18.4px;color:#000;">13:00</span>
<span class="t" style="left:801.80px;top:1058.00px;font-size:18.4px;line-height:18.4px;color:#000;">Car</span>
<span class="t" style="left:969.05px;top:1058.00px;font-size:18.4px;line-height:18.4px;color:#000;">NUM14112</span>
<span class="t" style="left:1206.98px;top:1058.00px;font-size:18.4px;line-height:18.4px;color:#000;">E</span>
<span class="t" style="left:1401.14px;top:1058.00px;font-size:18.4px;line-height:18.4px;color:#000;">13</span>
<span class="t" style="left:1593.26px;top:1058.00px;font-size:18.4px;line-height:18.4px;color:#000;">E13</span>
<span class="t" style="left:1765.45px;top:1058.00px;font-size:18.4px;line-height:18.4px;color:#000;">29-Mar-21</span>
<span class="t" style="left:1983.11px;top:1058.00px;font-size:18.4px;line-height:18.4px;color:#000;">16:00</span>
<span class="t" style="left:2199.26px;top:1058.00px;font-size:18.4px;line-height:18.4px;color:#000;">0</span>
<span class="t" style="left:2381.38px;top:1058.00px;font-size:18.4px;line-height:18.4px;color:#000;">3</span>
<span class="t" style="left:381.28px;top:1115.00px;font-size:18.4px;line-height:18.4px;color:#000;">2-May-21</span>
<span class="t" style="left:600.48px;top:1115.00px;font-size:18.4px;line-height:18.4px;color:#000;">8:00</span>
<span class="t" style="left:793.98px;top:1115.00px;font-size:18.4px;line-height:18.4px;color:#000;">Truck</span>
<span class="t" style="left:968.36px;top:1115.00px;font-size:18.4px;line-height:18.4px;color:#000;">NUM14615</span>
<span class="t" style="left:1210.56px;top:1115.00px;font-size:18.4px;line-height:18.4px;color:#000;">I</span>
<span class="t" style="left:1401.14px;top:1115.00px;font-size:18.4px;line-height:18.4px;color:#000;">13</span>
<span class="t" style="left:1596.84px;top:1115.00px;font-size:18.4px;line-height:18.4px;color:#000;">I13</span>
<span class="t" style="left:1769.03px;top:1115.00px;font-size:18.4px;line-height:18.4px;color:#000;">2-May-21</span>
<span class="t" style="left:1983.11px;top:1115.00px;font-size:18.4px;line-height:18.4px;color:#000;">16:00</span>
<span class="t" style="left:2199.26px;top:1115.00px;font-size:18.4px;line-height:18.4px;color:#000;">0</span>
<span class="t" style="left:2381.38px;top:1115.00px;font-size:18.4px;line-height:18.4px;color:#000;">8</span>
<span class="t" style="left:377.70px;top:1172.00px;font-size:18.4px;line-height:18.4px;color:#000;">14-Feb-21</span>
<span class="t" style="left:595.36px;top:1172.00px;font-size:18.4px;line-height:18.4px;color:#000;">12:00</span>
<span class="t" style="left:793.98px;top:1172.00px;font-size:18.4px;line-height:18.4px;color:#000;">Truck</span>
<span class="t" style="left:968.36px;top:1172.00px;font-size:18.4px;line-height:18.4px;color:#000;">NUM16401</span>
<span class="t" style="left:1206.98px;top:1172.00px;font-size:18.4px;line-height:18.4px;color:#000;">B</span>
<span class="t" style="left:1401.14px;top:1172.00px;font-size:18.4px;line-height:18.4px;color:#000;">20</span>
<span class="t" style="left:1593.26px;top:1172.00px;font-size:18.4px;line-height:18.4px;color:#000;">B20</span>
<span class="t" style="left:1765.45px;top:1172.00px;font-size:18.4px;line-height:18.4px;color:#000;">14-Feb-21</span>
<span class="t" style="left:1983.11px;top:1172.00px;font-size:18.4px;line-height:18.4px;color:#000;">21:00</span>
<span class="t" style="left:2199.26px;top:1172.00px;font-size:18.4px;line-height:18.4px;color:#000;">0</span>
<span class="t" style="left:2381.38px;top:1172.00px;font-size:18.4px;line-height:18.4px;color:#000;">9</span>
<svg style="position:absolute;left:708.5px;top:1px" width="8" height="8"><path d="M0 0H8V8Z" fill="#d42020"/></svg>
<svg style="position:absolute;left:2096.2px;top:1px" width="8" height="8"><path d="M0 0H8V8Z" fill="#d42020"/></svg>
<div style="position:absolute;left:1707.2px;top:187.2px;width:201.6px;height:59.8px;border:2.6px solid #21734a;box-sizing:border-box"></div>
<div style="position:absolute;left:1902.4px;top:241.7px;width:7px;height:7px;background:#21734a;border:1px solid #fff;box-sizing:content-box"></div>
<div style="position:absolute;left:53.800px;top:5px;width:245.300px;height:47.200px;background:#8dd0ac;border:1.500px solid #84b99c;border-radius:8px;box-sizing:border-box;box-shadow:2.500px 3px 5px rgba(0,0,0,.32)"></div>
<svg style="position:absolute;left:0;top:0" width="330" height="132" viewBox="0 223 330 132">
<path d="M78.400 233.100L98.800 247.100H89.500V259.900H69.100V247.100H58.400Z" fill="#4cb67e"/>
<rect x="2.300" y="277.600" width="22.600" height="22" fill="#f0f0f0" stroke="#9a9a9a" stroke-width="1.200"/>
<path d="M128.4 292.8L142.0 292.8L138.7 297.6L144.8 305.2L139.5 310.4L133.4 304.5L128.4 307.5Z" fill="#a8a6a6"/>
<path d="M163.9 292.8L150.3 292.8L153.6 297.6L147.5 305.2L152.8 310.4L158.9 304.5L163.9 307.5Z" fill="#a8a6a6"/>
<path d="M128.4 332.0L142.0 332.0L138.7 327.2L144.8 319.6L139.5 314.4L133.4 320.3L128.4 317.3Z" fill="#a8a6a6"/>
<path d="M163.9 332.0L150.3 332.0L153.6 327.2L147.5 319.6L152.8 314.4L158.9 320.3L163.9 317.3Z" fill="#a8a6a6"/>
<path d="M258.36 304.57A16.5 16.5 0 0 1 287.5 297.84" fill="none" stroke="#a8a6a6" stroke-width="7" stroke-linecap="round"/>
<path d="M290.8 291.3L291.5 307.3L280 300.3Z" fill="#a8a6a6" stroke="#a8a6a6" stroke-width="1" stroke-linejoin="round"/>
<path d="M289.84 318.83A16.5 16.5 0 0 1 260.7 325.56" fill="none" stroke="#a8a6a6" stroke-width="7" stroke-linecap="round"/>
<path d="M257.4 332.1L256.7 316.1L268.2 323.1Z" fill="#a8a6a6" stroke="#a8a6a6" stroke-width="1" stroke-linejoin="round"/>
</svg>
<span class="t" style="left:124.50px;top:20.00px;font-size:19.9px;line-height:19.9px;color:#e0fff0;letter-spacing:0.454px;">Show Dashboard</span>
<span class="t" style="left:80.60px;top:72.00px;font-size:16.2px;line-height:16.2px;color:#7f7f7f;letter-spacing:0.235px;">Full</span>
<span class="t" style="left:67.00px;top:91.00px;font-size:16.2px;line-height:16.2px;color:#7f7f7f;letter-spacing:0.341px;">Screen</span>
<span class="t" style="left:179.20px;top:81.00px;font-size:16.2px;line-height:16.2px;color:#7f7f7f;letter-spacing:0.302px;">Refresh</span>
<span class="t" style="left:8.43px;top:57.00px;font-size:17px;line-height:17px;color:#222;">+</span>
</div>
<div id="vscroll"></div>
<div class="sb" style="left:2390.6px;top:224.9px;width:27.8px;height:26.8px"></div>
<div class="sb" style="left:2390.6px;top:253.3px;width:27.8px;height:28.9px"></div>
<div class="sb" style="left:2390.4px;top:1377.2px;width:27.8px;height:27px"></div>
<div id="bottom"></div>
<div style="position:absolute;left:1498px;top:1409.4px;width:860px;height:27.6px;background:#f0f0f0"></div>
<div class="sb" style="left:1471.7px;top:1409.4px;width:28.1px;height:27.6px"></div>
<div class="sb" style="left:1500.6px;top:1409.4px;width:656px;height:27.6px"></div>
<div class="sb" style="left:2357.8px;top:1409.4px;width:28.7px;height:27.6px"></div>
<div class="tab" style="left:130.8px;width:161px;background:#c00000;border:1.2px solid #e6a3a3;border-bottom:none"></div>
<div class="tab" style="left:293.2px;width:158.3px;top:1404px;height:36px;background:linear-gradient(#ffffff 25%,#c4e7d4 92%);border-bottom:2px solid #217346;border-right:1px solid #b5b5b5"></div>
<div class="tab" style="left:452.8px;width:189.6px;background:#8dcfab;border:1.2px solid #c6ead8;border-bottom:none"></div>
<div class="tab" style="left:646.8px;width:122px;background:#a6a6a6;border:1.2px solid #d2d2d2;border-bottom:none"></div>
<span class="t" style="left:146.60px;top:1411.00px;font-size:23.6px;line-height:23.6px;color:#fbeaea;letter-spacing:0.518px;">Introduction</span>
<span class="t" style="left:304.80px;top:1411.00px;font-size:23.6px;line-height:23.6px;color:#217346;font-weight:700;letter-spacing:-0.134px;">Parking Log</span>
<span class="t" style="left:469.80px;top:1411.00px;font-size:23.6px;line-height:23.6px;color:#16301f;letter-spacing:-0.139px;">Parking Layout</span>
<span class="t" style="left:658.20px;top:1411.00px;font-size:23.6px;line-height:23.6px;color:#1e1e1e;letter-spacing:-0.457px;">Database</span>
<svg style="position:absolute;left:0;top:223px" width="2422" height="1217" viewBox="0 223 2422 1217">
<path d="M2398 241.600H2410.800L2404.400 234.600Z" fill="#222"/>
<path d="M2398 1387.600H2410.800L2404.400 1394.600Z" fill="#222"/>
<path d="M1488.800 1417.200V1430.200L1481.800 1423.700Z" fill="#222"/>
<path d="M2368.600 1417.200V1430.200L2375.600 1423.700Z" fill="#222"/>
<rect x="1449" y="1415.4" width="3.400" height="3.400" fill="#b9b9b9"/>
<rect x="1449" y="1422.4" width="3.400" height="3.400" fill="#b9b9b9"/>
<rect x="1449" y="1429.4" width="3.400" height="3.400" fill="#b9b9b9"/>
<path d="M39 1417.800V1429.800L30.600 1423.800Z" fill="#c3c3c3"/><path d="M68 1417.800V1429.800L76.400 1423.800Z" fill="#c3c3c3"/>
<circle cx="828.500" cy="1424.600" r="13" fill="#e9e9e9" stroke="#7f7f7f" stroke-width="1.500"/>
<path d="M821.400 1424.800H835.600M828.500 1417.600V1432" stroke="#8a8a8a" stroke-width="3"/>
</svg>
</div></body></html>
